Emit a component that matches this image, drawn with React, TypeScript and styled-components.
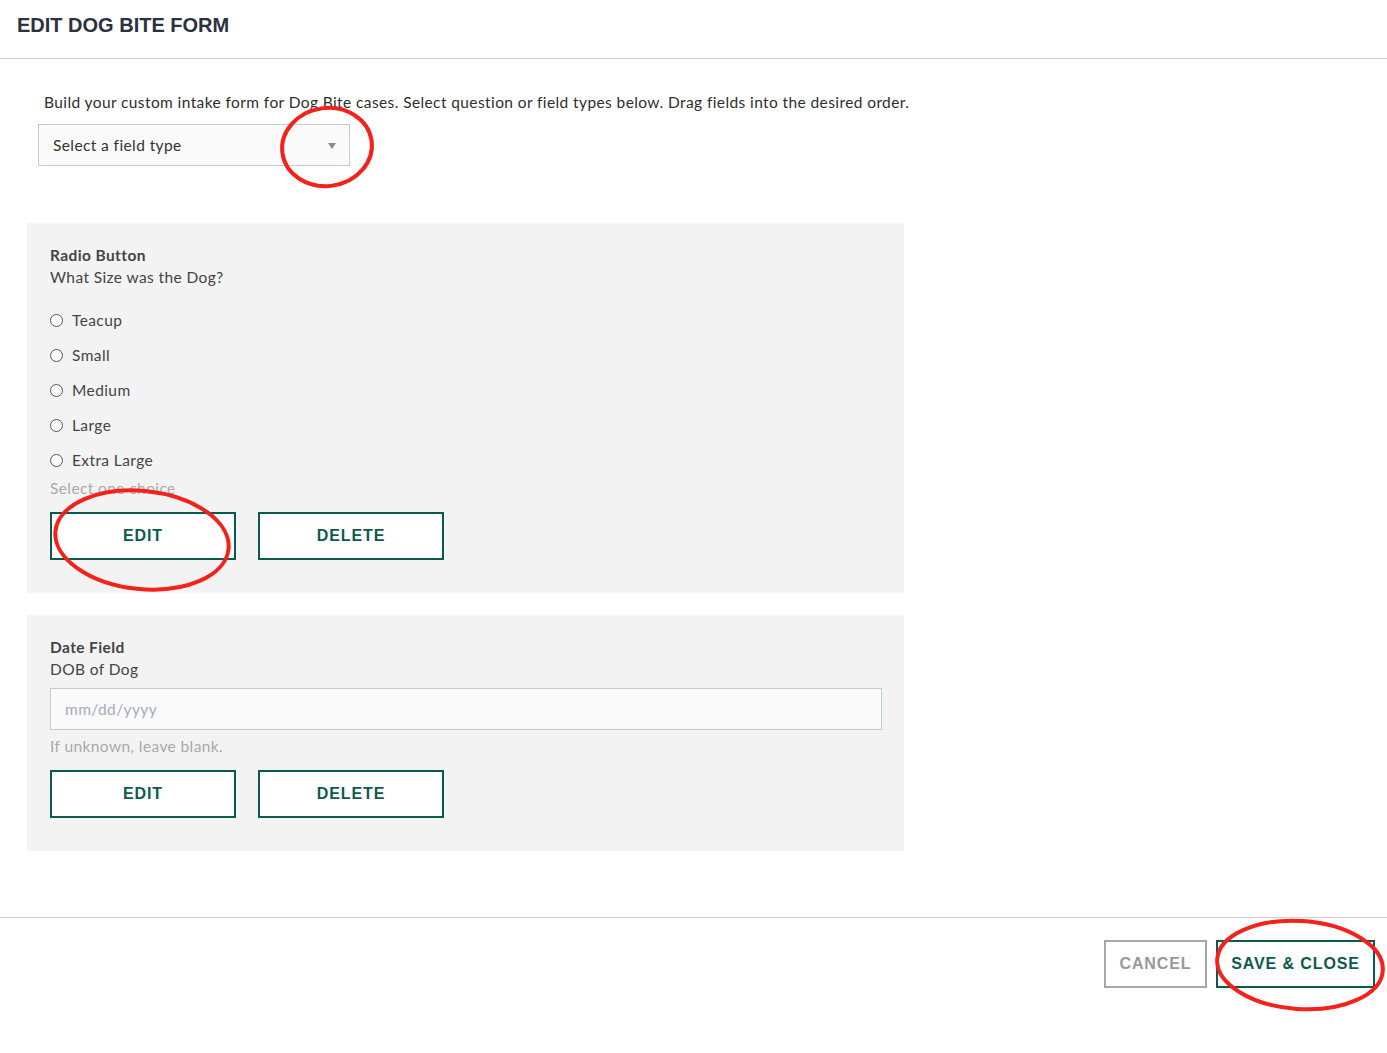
import React from "react";
import styled, { createGlobalStyle } from "styled-components";

const GlobalStyle = createGlobalStyle`
  html, body { margin: 0; padding: 0; background: #ffffff; }
  body { font-family: "Lato", "Liberation Sans", sans-serif; color: #3a3a3a; letter-spacing: 0.4px; }
  * { box-sizing: border-box; }
`;

const GREEN = "#0c5a4f";

const Page = styled.div`
  position: relative;
  width: 1387px;
  min-height: 1053px;
`;

const Header = styled.header`
  height: 59px;
  border-bottom: 1px solid #cfd0d4;
  display: flex;
  align-items: center;
  padding: 0 17px 8px;
`;

const Title = styled.h1`
  margin: 0;
  font-family: "Liberation Sans", Arial, sans-serif;
  font-weight: 700;
  font-size: 20px;
  color: #2b3140;
  letter-spacing: 0;
`;

const Main = styled.main`
  padding: 33px 27px 66px;
  display: flex;
  flex-direction: column;
`;

const Intro = styled.p`
  margin: 0 0 12px 17px;
  font-size: 15.5px;
  line-height: 20px;
  color: #2e2e2e;
`;

const SelectBox = styled.div`
  margin-left: 11px;
  width: 312px;
  height: 42px;
  border: 1px solid #c5cad9;
  background: #fafafa;
  display: flex;
  align-items: center;
  justify-content: space-between;
  padding: 0 13px 0 14px;
  font-size: 15.5px;
  color: #333;
`;

const Caret = styled.span`
  width: 0;
  height: 0;
  border-left: 4px solid transparent;
  border-right: 4px solid transparent;
  border-top: 6px solid #8a8a8a;
  margin-top: 2px;
`;

const Cards = styled.div`
  margin-top: 57px;
  display: flex;
  flex-direction: column;
  gap: 22px;
`;

const Card = styled.section`
  width: 877px;
  background: #f3f3f3;
  padding: 21px 22px 33px 23px;
  display: flex;
  flex-direction: column;
`;

const FieldType = styled.div`
  font-weight: 700;
  font-size: 15.5px;
  line-height: 22px;
  color: #444;
`;

const Question = styled.div`
  font-size: 15.5px;
  line-height: 22px;
  color: #444;
`;

const RadioList = styled.div`
  margin-top: 14px;
  display: flex;
  flex-direction: column;
`;

const RadioRow = styled.label`
  height: 35px;
  display: flex;
  align-items: center;
  gap: 9px;
  font-size: 15.5px;
  color: #444;
`;

const RadioDot = styled.span`
  width: 13px;
  height: 13px;
  border-radius: 50%;
  border: 1px solid #555;
  background: #fff;
  flex: none;
  margin-top: 1px;
`;

const Hint = styled.div<{ $top?: number }>`
  margin-top: ${(p) => p.$top ?? 0}px;
  font-size: 15.5px;
  line-height: 22px;
  color: #a9a9ab;
`;

const DateInput = styled.div`
  margin-top: 8px;
  height: 42px;
  border: 1px solid #c5cad9;
  background: #fafafa;
  display: flex;
  align-items: center;
  padding-left: 14px;
  font-size: 15.5px;
  color: #a3abbe;
`;

const ButtonRow = styled.div`
  margin-top: 13px;
  display: flex;
  gap: 22px;
`;

const OutlineButton = styled.button<{ $w: number; $muted?: boolean }>`
  width: ${(p) => p.$w}px;
  height: 48px;
  background: #fff;
  border: 2px solid ${(p) => (p.$muted ? "#a7a7a7" : GREEN)};
  color: ${(p) => (p.$muted ? "#989898" : GREEN)};
  font-family: "Liberation Sans", Arial, sans-serif;
  font-weight: 700;
  font-size: 16px;
  letter-spacing: 0.9px;
  padding: 0;
  cursor: pointer;
`;

const Footer = styled.footer`
  border-top: 1px solid #cfd0d4;
  padding: 22px 12px 0 0;
  display: flex;
  justify-content: flex-end;
  gap: 9px;
`;

const Annotations = styled.svg`
  position: absolute;
  left: 0;
  top: 0;
  pointer-events: none;
`;

const options = ["Teacup", "Small", "Medium", "Large", "Extra Large"];

export default function App() {
  return (
    <Page>
      <GlobalStyle />
      <Header>
        <Title>EDIT DOG BITE FORM</Title>
      </Header>
      <Main>
        <Intro>
          Build your custom intake form for Dog Bite cases. Select question or field types below. Drag fields into the
          desired order.
        </Intro>
        <SelectBox>
          <span>Select a field type</span>
          <Caret />
        </SelectBox>
        <Cards>
          <Card>
            <FieldType>Radio Button</FieldType>
            <Question>What Size was the Dog?</Question>
            <RadioList>
              {options.map((o) => (
                <RadioRow key={o}>
                  <RadioDot />
                  {o}
                </RadioRow>
              ))}
            </RadioList>
            <Hint>Select one choice</Hint>
            <ButtonRow>
              <OutlineButton $w={186}>EDIT</OutlineButton>
              <OutlineButton $w={186}>DELETE</OutlineButton>
            </ButtonRow>
          </Card>
          <Card>
            <FieldType>Date Field</FieldType>
            <Question>DOB of Dog</Question>
            <DateInput>mm/dd/yyyy</DateInput>
            <Hint $top={5}>If unknown, leave blank.</Hint>
            <ButtonRow>
              <OutlineButton $w={186}>EDIT</OutlineButton>
              <OutlineButton $w={186}>DELETE</OutlineButton>
            </ButtonRow>
          </Card>
        </Cards>
      </Main>
      <Footer>
        <OutlineButton $w={103} $muted>
          CANCEL
        </OutlineButton>
        <OutlineButton $w={159}>SAVE &amp; CLOSE</OutlineButton>
      </Footer>
      <Annotations width={1387} height={1053} viewBox="0 0 1387 1053">
        <g fill="none" stroke="#f5221b" strokeWidth={4}>
          <ellipse cx={327} cy={147} rx={45} ry={39} transform="rotate(-8 327 147)" />
          <ellipse cx={142} cy={540} rx={87} ry={49} transform="rotate(6 142 540)" />
          <ellipse cx={1300} cy={965} rx={83} ry={44} transform="rotate(4 1300 965)" />
        </g>
      </Annotations>
    </Page>
  );
}
